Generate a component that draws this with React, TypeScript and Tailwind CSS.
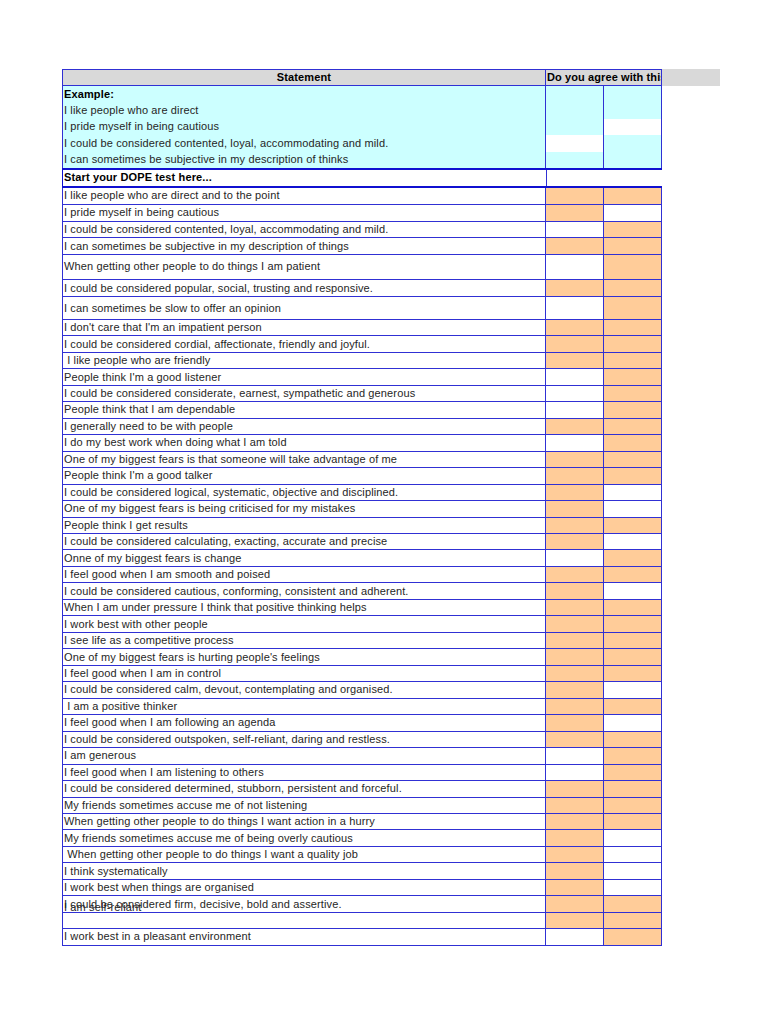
import React from "react";

type Row = { text: string; a: boolean; b: boolean; h?: string; overlay?: string };

// true = peach cell, false = white cell
const rows: Row[] = [
  { text: "I like people who are direct and to the point", a: true, b: true, h: "h-[17px]" },
  { text: "I pride myself in being cautious", a: true, b: false, h: "h-[16.7px]" },
  { text: "I could be considered contented, loyal, accommodating and mild.", a: false, b: true, h: "h-[16.7px]" },
  { text: "I can sometimes be subjective in my description of things", a: true, b: true, h: "h-[16.6px]" },
  { text: "When getting other people to do things I am patient", a: false, b: true, h: "h-[25px]" },
  { text: "I could be considered popular, social, trusting and responsive.", a: true, b: true, h: "h-[17.3px]" },
  { text: "I can sometimes be slow to offer an opinion", a: false, b: true, h: "h-[22.7px]" },
  { text: "I don't care that I'm an impatient person", a: true, b: true },
  { text: "I could be considered cordial, affectionate, friendly and joyful.", a: true, b: true },
  { text: " I like people who are friendly", a: true, b: true },
  { text: "People think I'm a good listener", a: false, b: true },
  { text: "I could be considered considerate, earnest, sympathetic and generous", a: false, b: true },
  { text: "People think that I am dependable", a: false, b: true },
  { text: "I generally need to be with people", a: true, b: true },
  { text: "I do my best work when doing what I am told", a: false, b: true },
  { text: "One of my biggest fears is that someone will take advantage of me", a: true, b: true },
  { text: "People think I'm a good talker", a: true, b: true },
  { text: "I could be considered logical, systematic, objective and disciplined.", a: true, b: false },
  { text: "One of my biggest fears is being criticised for my mistakes", a: true, b: false },
  { text: "People think I get results", a: true, b: true },
  { text: "I could be considered calculating, exacting, accurate and precise", a: true, b: false },
  { text: "Onne of my biggest fears is change", a: false, b: true },
  { text: "I feel good when I am smooth and poised", a: true, b: true },
  { text: "I could be considered cautious, conforming, consistent and adherent.", a: true, b: false },
  { text: "When I am under pressure I think that positive thinking helps", a: true, b: true },
  { text: "I work best with other people", a: true, b: true },
  { text: "I see life as a competitive process", a: true, b: true },
  { text: "One of my biggest fears is hurting people's feelings", a: true, b: true },
  { text: "I feel good when I am in control", a: true, b: true },
  { text: "I could be considered calm, devout, contemplating and organised.", a: true, b: false },
  { text: " I am a positive thinker", a: true, b: true },
  { text: "I feel good when I am following an agenda", a: true, b: false },
  { text: "I could be considered outspoken, self-reliant, daring and restless.", a: true, b: true },
  { text: "I am generous", a: false, b: true },
  { text: "I feel good when I am listening to others", a: false, b: true },
  { text: "I could be considered determined, stubborn, persistent and forceful.", a: true, b: true },
  { text: "My friends sometimes accuse me of not listening", a: true, b: true },
  { text: "When getting other people to do things I want action in a hurry", a: true, b: true },
  { text: "My friends sometimes accuse me of being overly cautious", a: true, b: false },
  { text: " When getting other people to do things I want a quality job", a: true, b: false },
  { text: "I think systematically", a: true, b: false },
  { text: "I work best when things are organised", a: true, b: false },
  { text: "I could be considered firm, decisive, bold and assertive.", a: true, b: true, overlay: "I am self-reliant" },
  { text: "", a: true, b: true },
  { text: "I work best in a pleasant environment", a: false, b: true },
];

const examples = [
  { text: "Example:", bold: true, a: true, b: true },
  { text: "I like people who are direct", bold: false, a: true, b: true },
  { text: "I pride myself in being cautious", bold: false, a: true, b: false },
  { text: "I could be considered contented, loyal, accommodating and mild.", bold: false, a: false, b: true },
  { text: "I can sometimes be subjective in my description of thinks", bold: false, a: true, b: true },
];

export default function App() {
  return (
    <div className="min-h-[1024px] bg-white pt-[69px] pl-[62px] font-['Liberation_Sans',Arial,sans-serif] text-[11px] leading-none tracking-[0.13px] text-[#262626]">
      {/* header */}
      <div className="flex h-[17px] w-[658px] bg-[#d9d9d9] font-bold text-black">
        <div className="flex w-[483px] items-center justify-center border-y border-l border-[#3030d4]">Statement</div>
        <div className="flex w-[117px] items-center overflow-hidden whitespace-nowrap border-y border-x border-[#3030d4] pl-px tracking-[0.1px]">
          Do you agree with this
        </div>
      </div>

      {/* example block */}
      <div className="flex w-[600px] bg-[#ccffff]">
        <div className="flex w-[483px] flex-col border-l border-[#3030d4]">
          {examples.map((e, i) => (
            <div key={i} className={`flex h-[16.4px] items-center whitespace-pre pl-px ${e.bold ? "font-bold text-black" : ""}`}>
              {e.text}
            </div>
          ))}
        </div>
        <div className="flex w-[58px] flex-col border-l border-[#3030d4]">
          {examples.map((e, i) => (
            <div key={i} className={`h-[16.4px] ${e.a ? "" : "bg-white"}`} />
          ))}
        </div>
        <div className="flex w-[59px] flex-col border-x border-[#3030d4]">
          {examples.map((e, i) => (
            <div key={i} className={`h-[16.4px] ${e.b ? "" : "bg-white"}`} />
          ))}
        </div>
      </div>

      {/* start row */}
      <div className="flex h-[20px] w-[600px] border-y-2 border-l border-[#1010d0]">
        <div className="flex w-[483px] items-center pl-px font-bold text-black">Start your DOPE test here...</div>
        <div className="w-[58px] border-l border-[#3030d4]" />
      </div>

      {/* statements */}
      <div className="w-[600px] border-l border-[#3030d4]">
        {rows.map((r, i) => (
          <div key={i} className={`flex ${r.h ?? "h-[16.47px]"} border-b border-[#3030d4]`}>
            <div className="relative flex w-[483px] items-center whitespace-pre pl-px">
              {r.text}
              {r.overlay && <span className="absolute left-px top-[6px]">{r.overlay}</span>}
            </div>
            <div className={`w-[58px] border-l border-[#3030d4] ${r.a ? "bg-[#ffcc99]" : "bg-white"}`} />
            <div className={`w-[59px] border-x border-[#3030d4] ${r.b ? "bg-[#ffcc99]" : "bg-white"}`} />
          </div>
        ))}
      </div>
    </div>
  );
}
